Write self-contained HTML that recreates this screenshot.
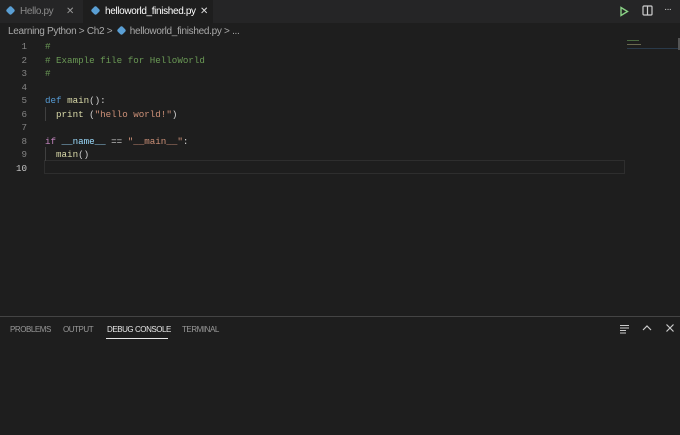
<!DOCTYPE html>
<html><head><style>
*{margin:0;padding:0;box-sizing:border-box}
body{width:680px;height:435px;background:#1e1e1e;font-family:"Liberation Sans",sans-serif;overflow:hidden;position:relative;color:#ccc}
.tabs{position:absolute;top:0;left:0;width:680px;height:23px;background:#252526}
.tab{position:absolute;top:0;height:23px;font-size:10px;letter-spacing:-0.35px;line-height:23px;color:#8a8a8a}
.tab.active{background:#1e1e1e;color:#fff}
.py{display:inline-block;width:7px;height:7px;background:#5a9fd4;border-radius:2px;transform:rotate(45deg);margin-right:6px;vertical-align:0px}
.crumb{position:absolute;top:24px;left:8px;font-size:10px;letter-spacing:-0.3px;color:#a9a9a9;line-height:16px}
.ln{position:absolute;left:0;width:27px;text-align:right;font-family:"Liberation Mono",monospace;font-size:9.2px;color:#858585}
.code{position:absolute;left:45px;font-family:"Liberation Mono",monospace;font-size:9.2px;white-space:pre;color:#d4d4d4}
.c{color:#6a9955}.k{color:#569cd6}.f{color:#dcdcaa}.s{color:#ce9178}.p{color:#c586c0}.v{color:#9cdcfe}
.panel{position:absolute;top:316px;left:0;width:680px;height:119px;border-top:1px solid #444;background:#1e1e1e}
.pt{position:absolute;top:8px;font-size:8px;color:#999;letter-spacing:-0.45px}
</style></head><body>
<div class="tabs">
<div class="tab" style="left:0;width:83px;padding-left:7px"><span class="py"></span>Hello.py<span style="position:absolute;left:66px;color:#999">✕</span></div>
<div class="tab active" style="left:83px;width:130px;padding-left:9px"><span class="py"></span>helloworld_finished.py<span style="position:absolute;left:117px;color:#ddd">✕</span></div>
<svg style="position:absolute;left:619px;top:6px" width="10" height="11"><path d="M2 1.5 L8.5 5.5 L2 9.5 Z" fill="none" stroke="#89d185" stroke-width="1.4"/></svg>
<svg style="position:absolute;left:642px;top:5px" width="11" height="11"><rect x="1" y="1" width="9" height="9" rx="1" fill="none" stroke="#ccc" stroke-width="1.2"/><line x1="5.5" y1="1" x2="5.5" y2="10" stroke="#ccc" stroke-width="1.2"/></svg>
<div style="position:absolute;left:664px;top:4px;font-size:10px;color:#ccc;letter-spacing:-1px">···</div>
</div>
<div class="crumb">Learning Python &gt; Ch2 &gt; <span class="py" style="margin:0 5px 0 3px"></span>helloworld_finished.py &gt; ...</div>
<div style="position:absolute;left:44px;top:160px;width:581px;height:14px;border:1px solid #2e2e2e"></div>
<div style="position:absolute;left:45px;top:107px;width:1px;height:14px;background:#404040"></div>
<div style="position:absolute;left:45px;top:147px;width:1px;height:14px;background:#404040"></div>
<div class="ln" style="top:41px">1</div><div class="code c" style="top:41px">#</div>
<div class="ln" style="top:54.5px">2</div><div class="code c" style="top:54.5px"># Example file for HelloWorld</div>
<div class="ln" style="top:68px">3</div><div class="code c" style="top:68px">#</div>
<div class="ln" style="top:81.5px">4</div>
<div class="ln" style="top:95px">5</div><div class="code" style="top:95px"><span class="k">def</span> <span class="f">main</span>():</div>
<div class="ln" style="top:108.5px">6</div><div class="code" style="top:108.5px">  <span class="f">print</span> (<span class="s">"hello world!"</span>)</div>
<div class="ln" style="top:122px">7</div>
<div class="ln" style="top:135.5px">8</div><div class="code" style="top:135.5px"><span class="p">if</span> <span class="v">__name__</span> == <span class="s">"__main__"</span>:</div>
<div class="ln" style="top:149px">9</div><div class="code" style="top:149px">  <span class="f">main</span>()</div>
<div class="ln" style="top:162.5px;color:#c6c6c6">10</div>
<div style="position:absolute;left:627px;top:40px;width:12px;height:1px;background:#4a6a40"></div>
<div style="position:absolute;left:627px;top:44px;width:14px;height:1px;background:#6a6a50"></div>
<div style="position:absolute;left:627px;top:48px;width:53px;height:1px;background:#2a3a4a"></div>
<div style="position:absolute;left:678px;top:38px;width:2px;height:12px;background:#555"></div>
<div class="panel">
<div class="pt" style="left:10px">PROBLEMS</div>
<div class="pt" style="left:63px">OUTPUT</div>
<div class="pt" style="left:107px;color:#e7e7e7">DEBUG CONSOLE</div>
<div style="position:absolute;left:106px;top:21px;width:62px;height:1px;background:#e7e7e7"></div>
<div class="pt" style="left:182px">TERMINAL</div>
<svg style="position:absolute;left:619px;top:7px" width="12" height="10"><path d="M1 1.5H10M1 4H10M1 6.5H7M1 9H7" stroke="#ccc" stroke-width="1"/></svg>
<svg style="position:absolute;left:642px;top:7px" width="10" height="8"><path d="M1 6L5 2L9 6" fill="none" stroke="#ccc" stroke-width="1.2"/></svg>
<svg style="position:absolute;left:665px;top:6px" width="10" height="10"><path d="M1.5 1.5L8.5 8.5M8.5 1.5L1.5 8.5" stroke="#ccc" stroke-width="1.2"/></svg>
</div>
</body></html>
